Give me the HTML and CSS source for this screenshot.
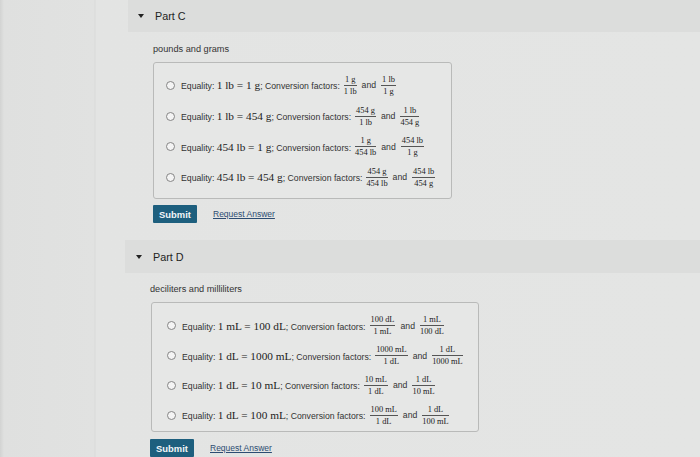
FILE: index.html
```html
<!DOCTYPE html>
<html>
<head>
<meta charset="utf-8">
<link rel="stylesheet" href="styles.css">
</head>
<body>
<div class="page">
  <div class="part-header hc"><span class="tri"></span><span class="part-title">Part C</span></div>
  <div class="part-body bc">
    <div class="prompt">pounds and grams</div>
    <div class="box boxc">
      <div class="opt"><span class="radio"></span><span class="lbl">Equality: <span class="m">1 lb = 1 g</span>; Conversion factors: </span><span class="frac"><span class="num">1 g</span><span class="den">1 lb</span></span><span class="and">and</span><span class="frac"><span class="num">1 lb</span><span class="den">1 g</span></span></div>
      <div class="opt"><span class="radio"></span><span class="lbl">Equality: <span class="m">1 lb = 454 g</span>; Conversion factors: </span><span class="frac"><span class="num">454 g</span><span class="den">1 lb</span></span><span class="and">and</span><span class="frac"><span class="num">1 lb</span><span class="den">454 g</span></span></div>
      <div class="opt"><span class="radio"></span><span class="lbl">Equality: <span class="m">454 lb = 1 g</span>; Conversion factors: </span><span class="frac"><span class="num">1 g</span><span class="den">454 lb</span></span><span class="and">and</span><span class="frac"><span class="num">454 lb</span><span class="den">1 g</span></span></div>
      <div class="opt"><span class="radio"></span><span class="lbl">Equality: <span class="m">454 lb = 454 g</span>; Conversion factors: </span><span class="frac"><span class="num">454 g</span><span class="den">454 lb</span></span><span class="and">and</span><span class="frac"><span class="num">454 lb</span><span class="den">454 g</span></span></div>
    </div>
    <div class="actions"><button class="submit">Submit</button><a class="req" href="#">Request Answer</a></div>
  </div>

  <div class="part-header hd"><span class="tri"></span><span class="part-title">Part D</span></div>
  <div class="part-body bd">
    <div class="prompt">deciliters and milliliters</div>
    <div class="box boxd">
      <div class="opt"><span class="radio"></span><span class="lbl">Equality: <span class="m">1 mL = 100 dL</span>; Conversion factors: </span><span class="frac"><span class="num">100 dL</span><span class="den">1 mL</span></span><span class="and">and</span><span class="frac"><span class="num">1 mL</span><span class="den">100 dL</span></span></div>
      <div class="opt"><span class="radio"></span><span class="lbl">Equality: <span class="m">1 dL = 1000 mL</span>; Conversion factors: </span><span class="frac"><span class="num">1000 mL</span><span class="den">1 dL</span></span><span class="and">and</span><span class="frac"><span class="num">1 dL</span><span class="den">1000 mL</span></span></div>
      <div class="opt"><span class="radio"></span><span class="lbl">Equality: <span class="m">1 dL = 10 mL</span>; Conversion factors: </span><span class="frac"><span class="num">10 mL</span><span class="den">1 dL</span></span><span class="and">and</span><span class="frac"><span class="num">1 dL</span><span class="den">10 mL</span></span></div>
      <div class="opt"><span class="radio"></span><span class="lbl">Equality: <span class="m">1 dL = 100 mL</span>; Conversion factors: </span><span class="frac"><span class="num">100 mL</span><span class="den">1 dL</span></span><span class="and">and</span><span class="frac"><span class="num">1 dL</span><span class="den">100 mL</span></span></div>
    </div>
    <div class="actions"><button class="submit">Submit</button><a class="req" href="#">Request Answer</a></div>
  </div>
</div>
</body>
</html>
```
FILE: styles.css
```css
html, body {
  margin: 0;
  padding: 0;
  background: #e3e4e3;
  font-family: "Liberation Sans", Arial, sans-serif;
  color: #2b2b2b;
}
.page {
  width: 700px;
  height: 457px;
  overflow: hidden;
  display: flex;
  flex-direction: column;
  background: linear-gradient(to right, #d2d3d2 0, #dfe0df 4px, #e1e2e1 94px, #d9dad9 95px, #e3e4e3 96px, #e4e5e4 100%);
}
.part-header {
  height: 32px;
  display: flex;
  align-items: center;
  background: #dcdddc;
  flex-shrink: 0;
}
.hc { margin-left: 128px; padding-left: 10px; }
.hd { margin-left: 125px; padding-left: 11px; margin-top: 17px; height: 33px; }
.tri {
  width: 0; height: 0;
  border-left: 3px solid transparent;
  border-right: 3px solid transparent;
  border-top: 4px solid #222;
  margin-right: 11px;
}
.part-title {
  font-size: 10.8px;
  color: #222;
}
.bc { margin-left: 153px; }
.bd { margin-left: 150px; }
.prompt {
  font-size: 9.2px;
  color: #333;
  line-height: 12px;
}
.bc .prompt { margin-top: 11px; margin-bottom: 7px; }
.bd .prompt { margin-top: 10px; margin-bottom: 7px; }
.box {
  border: 1px solid #b9bab9;
  border-radius: 3px;
  background: #e6e7e6;
  box-sizing: border-box;
  display: flex;
  flex-direction: column;
}
.boxc { width: 299px; height: 137px; padding: 7px 0 0 12px; }
.boxc .opt { height: 30.7px; }
.boxd { width: 328px; height: 130px; margin-left: 1px; padding: 8px 0 0 15px; }
.boxd .opt { height: 29.8px; }
.opt {
  display: flex;
  align-items: center;
  font-size: 8.7px;
  color: #333;
  white-space: nowrap;
}
.radio {
  width: 7px; height: 7px;
  border: 1px solid #858585;
  border-radius: 50%;
  background: #f4f4f4;
  margin-right: 6px;
  flex-shrink: 0;
}
.m {
  font-family: "Liberation Serif", "Times New Roman", serif;
  font-size: 11.3px;
  color: #222;
}
.lbl { margin-right: 4px; }
.frac {
  display: inline-flex;
  flex-direction: column;
  align-items: center;
  font-family: "Liberation Serif", "Times New Roman", serif;
  font-size: 8.4px;
  color: #222;
  line-height: 9px;
}
.num {
  border-bottom: 1px solid #555;
  padding: 0 1px 1px;
  align-self: stretch;
  text-align: center;
}
.den { padding-top: 1px; }
.and { margin: 0 5px; }
.actions {
  display: flex;
  align-items: center;
}
.bc .actions { margin-top: 6px; }
.bd .actions { margin-top: 7px; }
.submit {
  width: 44px;
  height: 18px;
  border: 0;
  border-radius: 1px;
  background: #1d5f7e;
  color: #f2f6f8;
  font-family: "Liberation Sans", Arial, sans-serif;
  font-size: 9.4px;
  font-weight: bold;
  padding: 0;
}
.req {
  margin-left: 16px;
  font-size: 8.5px;
  color: #2c4c72;
  text-decoration: underline;
}
```
